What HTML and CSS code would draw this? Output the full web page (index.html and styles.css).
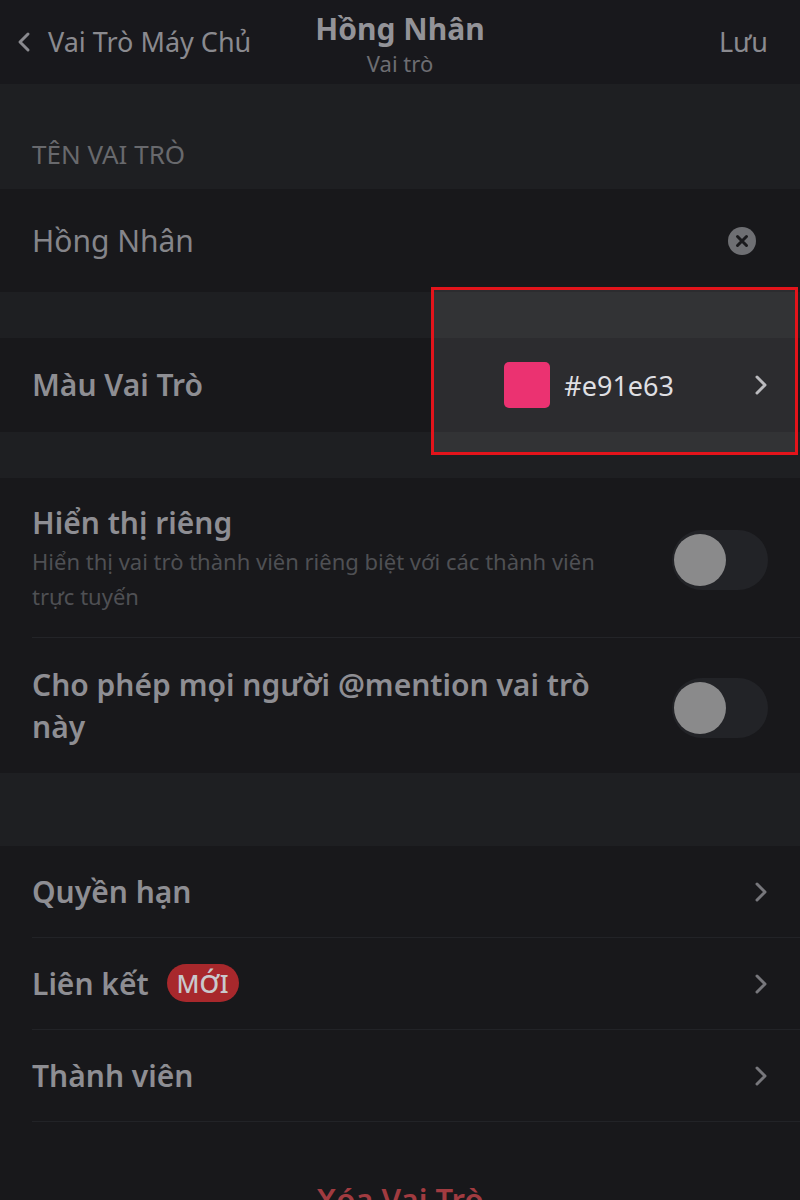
FILE: index.html
```html
<!DOCTYPE html>
<html lang="vi">
<head>
    <meta charset="UTF-8">
    <meta name="viewport" content="width=device-width, initial-scale=1.0">
    <title>Hồng Nhân - Vai trò</title>
    <link rel="stylesheet" href="styles.css">
</head>
<body>

    <header class="topbar">
        <div class="topbar-back">
            <svg class="back-icon" viewBox="0 0 16 22" width="16" height="22">
                <path d="M12 3 L4 11 L12 19" fill="none" stroke="currentColor" stroke-width="3" stroke-linecap="round" stroke-linejoin="round"/>
            </svg>
            <span>Vai Trò Máy Chủ</span>
        </div>
        <div class="topbar-title">
            <div class="title">Hồng Nhân</div>
            <div class="subtitle">Vai trò</div>
        </div>
        <div class="topbar-save">Lưu</div>
    </header>

    <main class="settings">
        <div class="section-label">TÊN VAI TRÒ</div>

        <div class="group">
            <div class="row name-row">
                <span class="name-value">Hồng Nhân</span>
                <svg class="clear-icon" viewBox="0 0 28 28" width="28" height="28">
                    <circle cx="14" cy="14" r="14" fill="#6e6f73"/>
                    <path d="M9.5 9.5 L18.5 18.5 M18.5 9.5 L9.5 18.5" stroke="#1a1a1d" stroke-width="3" stroke-linecap="round"/>
                </svg>
            </div>
        </div>

        <div class="spacer spacer-sm"></div>

        <div class="group">
            <div class="row color-row">
                <span class="row-label">Màu Vai Trò</span>
                <div class="color-value">
                    <span class="swatch"></span>
                    <span class="hex">#e91e63</span>
                    <svg class="chevron" viewBox="0 0 14 24" width="14" height="24">
                        <path d="M3 4 L11 12 L3 20" fill="none" stroke="currentColor" stroke-width="3" stroke-linecap="round" stroke-linejoin="round"/>
                    </svg>
                </div>
            </div>
        </div>

        <div class="spacer spacer-sm"></div>

        <div class="group">
            <div class="row toggle-row first">
                <div class="toggle-text">
                    <div class="row-label">Hiển thị riêng</div>
                    <div class="row-desc">Hiển thị vai trò thành viên riêng biệt với các thành viên trực tuyến</div>
                </div>
                <span class="switch"><span class="knob"></span></span>
            </div>
            <div class="row toggle-row">
                <div class="toggle-text">
                    <div class="row-label">Cho phép mọi người @mention vai trò này</div>
                </div>
                <span class="switch"><span class="knob"></span></span>
            </div>
        </div>

        <div class="spacer spacer-lg"></div>

        <div class="group">
            <div class="row link-row">
                <span class="row-label">Quyền hạn</span>
                <svg class="chevron dim" viewBox="0 0 14 24" width="14" height="24">
                    <path d="M3 4 L11 12 L3 20" fill="none" stroke="currentColor" stroke-width="3" stroke-linecap="round" stroke-linejoin="round"/>
                </svg>
            </div>
            <div class="row link-row">
                <span class="row-label">Liên kết <span class="badge">MỚI</span></span>
                <svg class="chevron dim" viewBox="0 0 14 24" width="14" height="24">
                    <path d="M3 4 L11 12 L3 20" fill="none" stroke="currentColor" stroke-width="3" stroke-linecap="round" stroke-linejoin="round"/>
                </svg>
            </div>
            <div class="row link-row">
                <span class="row-label">Thành viên</span>
                <svg class="chevron dim" viewBox="0 0 14 24" width="14" height="24">
                    <path d="M3 4 L11 12 L3 20" fill="none" stroke="currentColor" stroke-width="3" stroke-linecap="round" stroke-linejoin="round"/>
                </svg>
            </div>
        </div>

        <div class="delete-row">Xóa Vai Trò</div>
    </main>

    <!-- highlight around the role colour picker -->
    <div class="callout"></div>

</body>
</html>
```

FILE: styles.css
```css
* {
    box-sizing: border-box;
}

body {
    margin: 0;
    height: 1200px;
    overflow: hidden;
    position: relative;
    font-family: "Noto Sans", "Open Sans", sans-serif;
    background-color: #1e1f22;
    color: #8e8e93;
}

.topbar {
    height: 84px;
    display: flex;
    align-items: flex-start;
    justify-content: space-between;
    background-color: #18181c;
    padding: 0 32px 0 16px;
}

.topbar-back {
    display: flex;
    align-items: center;
    gap: 16px;
    margin-top: 25px;
    font-size: 27px;
    color: #8a8a8f;
    line-height: 34px;
}

.back-icon {
    color: #8a8a8f;
}

.topbar-title {
    position: absolute;
    left: 0;
    right: 0;
    top: 9px;
    text-align: center;
    pointer-events: none;
}

.title {
    font-size: 30px;
    font-weight: 700;
    color: #939398;
    line-height: 40px;
}

.subtitle {
    font-size: 22px;
    color: #6d6d72;
    line-height: 28px;
}

.topbar-save {
    margin-top: 24px;
    font-size: 27px;
    line-height: 36px;
    color: #8a8a8f;
}

.section-label {
    height: 105px;
    padding: 52px 32px 0;
    font-size: 26px;
    line-height: 36px;
    color: #68696d;
}

.group {
    background-color: #18181b;
}

.row {
    display: flex;
    align-items: center;
    justify-content: space-between;
    padding: 0 32px;
}

.name-row {
    height: 103px;
    padding-right: 44px;
}

.name-value {
    font-size: 30px;
    color: #85858a;
}

.spacer-sm {
    height: 46px;
}

.spacer-lg {
    height: 73px;
}

.row-label {
    font-size: 30px;
    font-weight: 600;
    color: #8e8e93;
    line-height: 42px;
}

.color-row {
    height: 94px;
    padding-right: 32px;
}

.color-value {
    display: flex;
    align-items: center;
}

.swatch {
    width: 46px;
    height: 46px;
    border-radius: 5px;
    background-color: #e91e63;
}

.hex {
    margin-left: 14px;
    margin-right: 80px;
    font-size: 27px;
    color: #dcdce0;
}

.chevron {
    color: #b4b4b8;
}

.chevron.dim {
    color: #77777c;
}

.toggle-row {
    padding-right: 32px;
    margin-left: 32px;
    padding-left: 0;
}

.toggle-row.first {
    height: 160px;
    border-bottom: 1px solid #232428;
}

.toggle-row + .toggle-row {
    height: 135px;
}

.toggle-text {
    width: 600px;
}

.row-desc {
    width: 590px;
    font-size: 22px;
    line-height: 35px;
    color: #4f5054;
}

.switch {
    display: block;
    width: 96px;
    height: 60px;
    border-radius: 30px;
    background-color: #222327;
    position: relative;
    flex-shrink: 0;
    margin-top: 4px;
}

.knob {
    position: absolute;
    left: 2px;
    top: 4px;
    width: 52px;
    height: 52px;
    border-radius: 50%;
    background-color: #8a8a8b;
}

.link-row {
    height: 92px;
    margin-left: 32px;
    padding-left: 0;
    border-bottom: 1px solid #222327;
}

.badge {
    display: inline-block;
    margin-left: 10px;
    padding: 0 10px;
    height: 38px;
    line-height: 38px;
    border-radius: 19px;
    background-color: #a8282c;
    color: #c9c9cc;
    font-size: 25px;
    font-weight: 500;
    vertical-align: 2px;
}

.delete-row {
    padding-top: 56px;
    text-align: center;
    font-size: 31px;
    font-weight: 600;
    color: #a13b40;
    background-color: #18181b;
    height: 120px;
}

.callout {
    position: absolute;
    left: 431px;
    top: 287px;
    width: 367px;
    height: 168px;
    border: 3px solid #e3141b;
    background-color: rgba(255, 255, 255, 0.09);
}
```
